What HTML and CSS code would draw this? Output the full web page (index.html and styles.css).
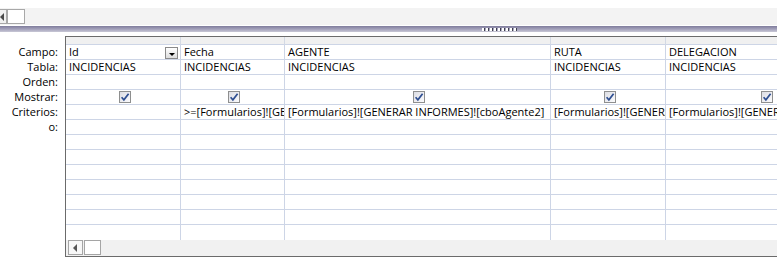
FILE: index.html
```html
<!DOCTYPE html>
<html lang="es">
<head>
<meta charset="utf-8">
<title>Diseño de consulta</title>
<link rel="stylesheet" href="styles.css">
</head>
<body>
<div class="top-space"></div>
<div class="toolbar">
  <span class="tb-btn"><span class="tri-left"></span></span>
  <span class="tb-thumb"></span>
</div>
<div class="splitter"><span class="dots"></span></div>
<div class="main">
  <div class="labels">
    <div class="lbl">Campo:</div>
    <div class="lbl">Tabla:</div>
    <div class="lbl">Orden:</div>
    <div class="lbl">Mostrar:</div>
    <div class="lbl">Criterios:</div>
    <div class="lbl">o:</div>
  </div>
  <div class="grid-wrap">
    <div class="grid">
      <div class="hc"></div><div class="hc"></div><div class="hc"></div><div class="hc"></div><div class="hc"></div>

      <div class="c c-field"><span>Id</span><span class="dd"><span class="tri-down"></span></span></div>
      <div class="c">Fecha</div>
      <div class="c">AGENTE</div>
      <div class="c">RUTA</div>
      <div class="c">DELEGACION</div>

      <div class="c">INCIDENCIAS</div>
      <div class="c">INCIDENCIAS</div>
      <div class="c">INCIDENCIAS</div>
      <div class="c">INCIDENCIAS</div>
      <div class="c">INCIDENCIAS</div>

      <div class="c"></div><div class="c"></div><div class="c"></div><div class="c"></div><div class="c"></div>

      <div class="c chk"><span class="cb"><svg width="10" height="10" viewBox="0 0 10 10"><path d="M1.6 5.2 L3.9 7.8 L8.6 1.8" fill="none" stroke="#2f4f91" stroke-width="1.7"/></svg></span></div>
      <div class="c chk"><span class="cb"><svg width="10" height="10" viewBox="0 0 10 10"><path d="M1.6 5.2 L3.9 7.8 L8.6 1.8" fill="none" stroke="#2f4f91" stroke-width="1.7"/></svg></span></div>
      <div class="c chk"><span class="cb"><svg width="10" height="10" viewBox="0 0 10 10"><path d="M1.6 5.2 L3.9 7.8 L8.6 1.8" fill="none" stroke="#2f4f91" stroke-width="1.7"/></svg></span></div>
      <div class="c chk"><span class="cb"><svg width="10" height="10" viewBox="0 0 10 10"><path d="M1.6 5.2 L3.9 7.8 L8.6 1.8" fill="none" stroke="#2f4f91" stroke-width="1.7"/></svg></span></div>
      <div class="c chk"><span class="cb"><svg width="10" height="10" viewBox="0 0 10 10"><path d="M1.6 5.2 L3.9 7.8 L8.6 1.8" fill="none" stroke="#2f4f91" stroke-width="1.7"/></svg></span></div>

      <div class="c"></div>
      <div class="c">&gt;=[Formularios]![GENERAR INFORMES]![txtFechaInicio]</div>
      <div class="c">[Formularios]![GENERAR INFORMES]![cboAgente2]</div>
      <div class="c">[Formularios]![GENERAR INFORMES]![cboRuta]</div>
      <div class="c">[Formularios]![GENERAR INFORMES]![cboDelegacion]</div>

      <div class="c"></div><div class="c"></div><div class="c"></div><div class="c"></div><div class="c"></div>
      <div class="c"></div><div class="c"></div><div class="c"></div><div class="c"></div><div class="c"></div>
      <div class="c"></div><div class="c"></div><div class="c"></div><div class="c"></div><div class="c"></div>
      <div class="c"></div><div class="c"></div><div class="c"></div><div class="c"></div><div class="c"></div>
      <div class="c"></div><div class="c"></div><div class="c"></div><div class="c"></div><div class="c"></div>
      <div class="c"></div><div class="c"></div><div class="c"></div><div class="c"></div><div class="c"></div>
      <div class="c"></div><div class="c"></div><div class="c"></div><div class="c"></div><div class="c"></div>
      <div class="c last"></div><div class="c last"></div><div class="c last"></div><div class="c last"></div><div class="c last"></div>
    </div>
    <div class="hscroll">
      <span class="sb-btn"><span class="tri-left2"></span></span>
      <span class="sb-thumb"></span>
    </div>
  </div>
</div>
</body>
</html>
```
FILE: styles.css
```css
html, body {
  margin: 0;
  padding: 0;
  background: #ffffff;
  overflow: hidden;
}
body {
  width: 777px;
  height: 271px;
  font-family: "Open Sans", "Noto Sans", sans-serif;
  font-size: 11px;
  color: #000;
}
.top-space { height: 8px; }
.toolbar {
  height: 17px;
  background: #f3f3f3;
  display: flex;
  align-items: center;
  overflow: hidden;
}
.tb-btn {
  box-sizing: border-box;
  width: 15px;
  height: 15px;
  margin-left: -8px;
  border: 1px solid #a8a8a8;
  background: #f0f0f0;
  display: flex;
  align-items: center;
  justify-content: flex-end;
  padding-right: 2px;
}
.tri-left {
  width: 0; height: 0;
  border-top: 4px solid transparent;
  border-bottom: 4px solid transparent;
  border-right: 4px solid #4a4a4a;
}
.tb-thumb {
  box-sizing: border-box;
  width: 18px;
  height: 15px;
  margin-left: 0;
  border: 1px solid #a8a8a8;
  background: #ffffff;
}
.splitter {
  margin-top: 1px;
  height: 6px;
  background: linear-gradient(#7f7c9c, #a9a7bf 60%, #c9c8d6);
  display: flex;
  align-items: center;
  padding-left: 482px;
}
.dots {
  width: 35px;
  height: 3px;
  background:
    repeating-linear-gradient(90deg, #ffffff 0 2px, #3f3f4f 2px 3px, transparent 3px 4px);
}
.main {
  margin-top: 4px;
  display: flex;
}
.labels {
  width: 65px;
  flex: none;
  padding-top: 9px;
}
.lbl {
  height: 15px;
  line-height: 14px;
  text-align: right;
  padding-right: 7px;
  white-space: nowrap;
}
.grid-wrap {
  flex: 1;
  min-width: 0;
  border-left: 1px solid #6b6b6b;
  border-top: 1px solid #6b6b6b;
  border-bottom: 1px solid #6b6b6b;
  overflow: hidden;
}
.grid {
  display: grid;
  grid-template-columns: 115px 104px 266px 115px 200px;
  grid-auto-rows: 15px;
  grid-template-rows: 8px;
}
.hc {
  box-sizing: border-box;
  background: #f0f0f0;
  border-right: 1px solid #d3d9e4;
  border-bottom: 1px solid #cdd5e6;
}
.c {
  box-sizing: border-box;
  border-right: 1px solid #cdd5e6;
  border-bottom: 1px solid #cdd5e6;
  padding-left: 3px;
  line-height: 14px;
  white-space: nowrap;
  overflow: hidden;
}
.c.last { border-bottom: none; }
.c-field {
  display: flex;
  justify-content: space-between;
  align-items: flex-end;
  padding-right: 2px;
}
.dd {
  box-sizing: border-box;
  width: 13px;
  height: 12px;
  border: 1px solid #8a8a8a;
  background: linear-gradient(#ffffff, #dcdcdc);
  display: flex;
  align-items: flex-end;
  justify-content: center;
  padding-bottom: 2px;
}
.tri-down {
  width: 0; height: 0;
  border-left: 3px solid transparent;
  border-right: 3px solid transparent;
  border-top: 3px solid #000;
}
.chk {
  display: flex;
  justify-content: center;
  align-items: center;
}
.cb {
  box-sizing: border-box;
  width: 12px;
  height: 12px;
  border: 1px solid #8e8f8f;
  background: linear-gradient(135deg, #dcdde3, #fbfbfd);
  display: flex;
  align-items: center;
  justify-content: center;
}
.cb svg { display: block; }
.hscroll {
  height: 16px;
  background: #f1f1f1;
  display: flex;
  align-items: flex-start;
  padding-left: 2px;
}
.sb-btn {
  box-sizing: border-box;
  width: 15px;
  height: 15px;
  border: 1px solid #a5a5a5;
  background: #f7f7f7;
  display: flex;
  align-items: center;
  padding-left: 4px;
}
.tri-left2 {
  width: 0; height: 0;
  border-top: 4px solid transparent;
  border-bottom: 4px solid transparent;
  border-right: 4px solid #555;
}
.sb-thumb {
  box-sizing: border-box;
  width: 17px;
  height: 15px;
  margin-left: 1px;
  border: 1px solid #a5a5a5;
  background: #ffffff;
}
```
